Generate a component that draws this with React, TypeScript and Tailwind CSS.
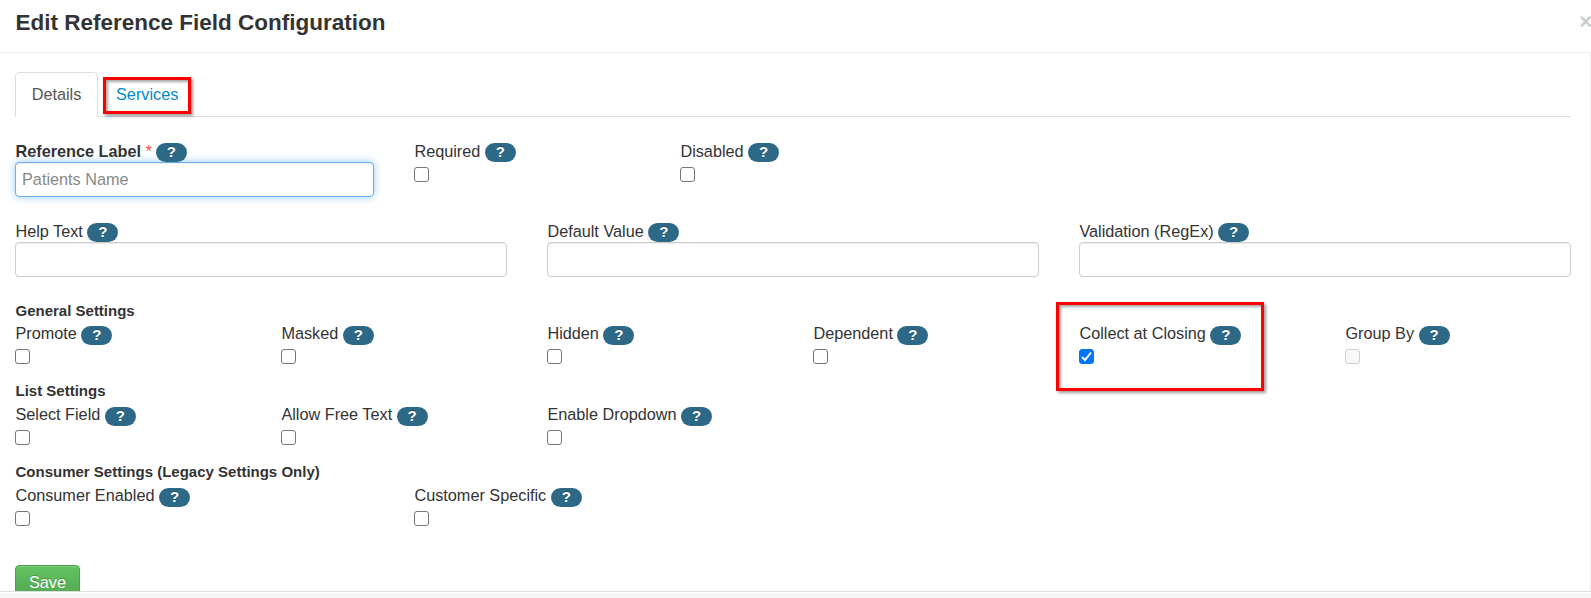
import { useState } from 'react';
import clsx from 'clsx';

interface CheckFieldProps {
  label: string;
  className?: string;
  defaultChecked?: boolean;
  disabled?: boolean;
  compact?: boolean;
}

interface TextFieldProps {
  label: string;
  className?: string;
}

function HelpBadge() {
  return (
    <span className="w-[31px] h-[19px] rounded-[10px] bg-[#2d6987] text-white text-[15px] leading-[17px] font-bold text-center [text-shadow:0_-1px_0_rgba(0,0,0,0.25)]">
      ?
    </span>
  );
}

function FieldLabel({ label, compact = false }: { label: string; compact?: boolean }) {
  return (
    <div className="flex h-[19px] gap-[4.5px] pl-[0.4px] whitespace-nowrap">
      <span className={clsx('leading-[18px]', compact ? '-mt-[2px]' : '-mt-px')}>{label}</span>
      <HelpBadge />
    </div>
  );
}

function CheckField({
  label,
  className = 'col-span-2',
  defaultChecked = false,
  disabled = false,
  compact = true,
}: CheckFieldProps) {
  const [checked, setChecked] = useState(defaultChecked);

  return (
    <div className={className}>
      <FieldLabel label={label} compact={compact} />
      <button
        type="button"
        role="checkbox"
        aria-checked={checked}
        aria-label={label}
        disabled={disabled}
        onClick={() => setChecked(!checked)}
        className={clsx(
          'block w-[15px] h-[15px] ml-[0.3px] rounded-[3px] border',
          compact ? 'mt-[4px]' : 'mt-[5px]',
          checked && 'bg-[#0075ff] border-[#0075ff]',
          !checked && !disabled && 'bg-white border-[#767676]',
          disabled && 'bg-[#f8f8f8] border-[#cfcfcf]'
        )}
      >
        {checked && (
          <svg viewBox="0 0 13 13" className="block w-[13px] h-[13px]" fill="none" stroke="white" strokeWidth="2">
            <path d="M2 7 L5 10 L11 2.5" />
          </svg>
        )}
      </button>
    </div>
  );
}

function TextField({ label, className = 'col-span-4' }: TextFieldProps) {
  return (
    <div className={className}>
      <FieldLabel label={label} />
      <input
        type="text"
        aria-label={label}
        className="block w-full h-[35px] px-[7px] rounded-[4px] border border-[#cccccc] bg-white outline-none shadow-[inset_0_1px_1px_rgba(0,0,0,0.075)]"
      />
    </div>
  );
}

function SectionTitle({ children, className = 'h-[26px]' }: { children: string; className?: string }) {
  return <h4 className={clsx('pl-[0.5px] text-[15px] leading-[20px] font-bold', className)}>{children}</h4>;
}

export default function App() {
  return (
    <div className="relative flex flex-col w-[1591px] h-[598px] overflow-hidden bg-white text-[#333333] text-[16.25px] font-['Liberation_Sans',Arial,sans-serif]">
      {/* Header */}
      <header className="flex justify-between h-[53px] shrink-0 pl-[15.5px] border-b border-[#eeeeee]">
        <h3 className="text-[22.5px] leading-[46px] font-bold">Edit Reference Field Configuration</h3>
        <button type="button" aria-label="Close" className="-mr-px h-[42px] text-[22px] leading-[41px] font-bold text-[#cccccc]">
          ×
        </button>
      </header>

      {/* Body */}
      <main className="h-[538px] shrink-0 overflow-hidden pl-[15px] pr-[19px] pt-[19px] border-r border-[#eeeeee]">
        <nav className="flex h-[45px] border-b border-[#dddddd]">
          <a className="w-[83px] h-[45px] border border-b-0 border-[#dddddd] rounded-t-[5px] bg-white text-[#555555] text-center leading-[43px]">
            Details
          </a>
          <a className="ml-[2px] px-[16px] pt-px text-[#0088cc] leading-[43px]">Services</a>
        </nav>

        <div className="grid grid-cols-12 gap-x-10 h-[80px] pt-[26px]">
          <div className="col-span-3">
            <div className="flex h-[19px] gap-[4px] pl-[0.5px] whitespace-nowrap">
              <span className="leading-[18px] -mt-px font-bold">
                Reference Label <span className="font-normal text-[#ff4b33]">*</span>
              </span>
              <HelpBadge />
            </div>
            <input
              type="text"
              aria-label="Reference Label"
              placeholder="Patients Name"
              className="block w-full h-[35px] px-[6px] rounded-[4px] border border-[#6ab0ee] bg-white outline-none placeholder:text-[#888888] shadow-[inset_0_1px_1px_rgba(0,0,0,0.075),0_0_9px_rgba(82,168,236,0.6)]"
            />
          </div>
          <CheckField label="Required" compact={false} />
          <CheckField label="Disabled" compact={false} />
        </div>

        <div className="grid grid-cols-12 gap-x-10 h-[84px] pt-[26px]">
          <TextField label="Help Text" />
          <TextField label="Default Value" />
          <TextField label="Validation (RegEx)" />
        </div>

        <section className="h-[100px] pt-[20px]">
          <SectionTitle className="h-[25px]">General Settings</SectionTitle>
          <div className="grid grid-cols-12 gap-x-10">
            <CheckField label="Promote" />
            <CheckField label="Masked" />
            <CheckField label="Hidden" />
            <CheckField label="Dependent" />
            <CheckField label="Collect at Closing" defaultChecked />
            <CheckField label="Group By" disabled />
          </div>
        </section>

        <section className="h-[81px]">
          <SectionTitle>List Settings</SectionTitle>
          <div className="grid grid-cols-12 gap-x-10">
            <CheckField label="Select Field" />
            <CheckField label="Allow Free Text" />
            <CheckField label="Enable Dropdown" />
          </div>
        </section>

        <section className="h-[103px]">
          <SectionTitle>Consumer Settings (Legacy Settings Only)</SectionTitle>
          <div className="grid grid-cols-12 gap-x-10">
            <CheckField label="Consumer Enabled" className="col-span-3" />
            <CheckField label="Customer Specific" />
          </div>
        </section>

        <button
          type="button"
          className="w-[65px] h-[36px] rounded-[4px] border border-[#4ba14b] bg-linear-to-b from-[#62c462] to-[#51a351] text-white leading-[32px] pb-[2px] [text-shadow:0_-1px_0_rgba(0,0,0,0.25)] shadow-[inset_0_1px_0_rgba(255,255,255,0.2)]"
        >
          Save
        </button>
      </main>

      {/* Footer */}
      <footer className="h-[7px] shrink-0 border-t border-[#dddddd] bg-[#f5f5f5] shadow-[inset_0_1px_0_#ffffff]" />

      {/* Highlights */}
      <div className="absolute left-[103px] top-[77px] w-[88px] h-[37px] border-3 border-[#ff0000] pointer-events-none shadow-[2px_2px_3px_rgba(0,0,0,0.4),inset_2px_2px_3px_rgba(0,0,0,0.35)]" />
      <div className="absolute left-[1056px] top-[302px] w-[208px] h-[89px] border-3 border-[#ff0000] pointer-events-none shadow-[2px_2px_3px_rgba(0,0,0,0.4),inset_2px_2px_3px_rgba(0,0,0,0.35)]" />
    </div>
  );
}
